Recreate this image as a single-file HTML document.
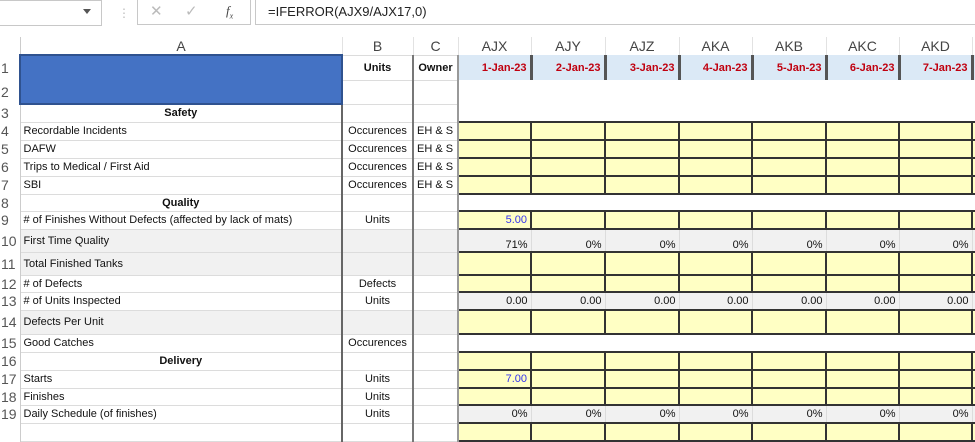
<!DOCTYPE html>
<html><head><meta charset="utf-8"><style>
body{margin:0;width:975px;height:430px;overflow:hidden;background:#fff;font-family:"Liberation Sans",sans-serif;position:relative}
.nb{position:absolute;left:-1px;top:0;width:102px;height:24px;border:1px solid #c8c8c8;border-left:none;background:#fff}
.tb{position:absolute;left:137px;top:0;width:112px;height:24px;border:1px solid #c8c8c8;border-top:none}
.fb{position:absolute;left:255px;top:0;width:730px;height:24px;border:1px solid #c8c8c8;border-top:none;font-size:13px;line-height:24px;padding-left:12px;color:#222}
table{position:absolute;left:0;top:37px;width:982px;border-collapse:collapse;table-layout:fixed;font-size:11px;color:#111}
td{padding:0 3px;white-space:nowrap;overflow:hidden;border:1px solid #dcdcdc}
td.rh{color:#555;font-size:14px;text-align:left;padding:0 0 0 1px;border:none;border-right:1px solid #ccc}
tr.h td{text-align:center;color:#444;font-size:14px;border:none;border-right:1px solid #e2e2e2}
.ca{border-left:none;border-right:2px solid #666}
.cb{text-align:center;border-right:2px solid #777}
.cc{border-right:2px solid #999}
.y{background:#ffffc4;border:2px solid #333}
.g{background:#f1f1f1;border:1px solid #dcdcdc;text-align:center}
.gA{background:#f1f1f1}
.d{background:#dbe9f6;color:#c0000f;font-weight:bold;text-align:right;border:none;border-right:3px solid #555}
.b{font-weight:bold;text-align:center}
.bl{color:#3333ee;text-align:right}
.w{border:none}
</style></head><body>
<div class="nb"><span style="position:absolute;right:10px;top:8px;border:4px solid transparent;border-top:5px solid #555"></span></div>
<div style="position:absolute;left:118px;top:6px;color:#bbb;font-size:12px">⋮</div>
<div class="tb"><span style="position:absolute;left:12px;top:2px;color:#bbb;font-size:15px">✕</span><span style="position:absolute;left:47px;top:2px;color:#bbb;font-size:15px">✓</span><span style="position:absolute;left:88px;top:3px;color:#444;font-size:13px;font-style:italic;font-family:'Liberation Serif',serif">f<sub style="font-size:8px">x</sub></span></div>
<div class="fb">=IFERROR(AJX9/AJX17,0)</div>
<table>
<colgroup><col style="width:20px"><col style="width:322px"><col style="width:71px"><col style="width:45px"><col style="width:73px"><col style="width:74px"><col style="width:74px"><col style="width:73px"><col style="width:74px"><col style="width:73px"><col style="width:73px"><col style="width:10px"></colgroup>
<tr class="h" style="height:18px"><td style="border-right:1px solid #ccc"></td><td>A</td><td>B</td><td>C</td><td>AJX</td><td>AJY</td><td>AJZ</td><td>AKA</td><td>AKB</td><td>AKC</td><td>AKD</td><td></td></tr>
<tr style="height:25px"><td class="rh">1</td><td rowspan="2" style="background:#4472c4;border:2px solid #2f528f"></td><td class="b" style="border-right:2px solid #777">Units</td><td class="b cc">Owner</td><td class="d">1-Jan-23</td><td class="d">2-Jan-23</td><td class="d">3-Jan-23</td><td class="d">4-Jan-23</td><td class="d">5-Jan-23</td><td class="d">6-Jan-23</td><td class="d">7-Jan-23</td><td class="d"></td></tr>
<tr style="height:24px"><td class="rh">2</td><td class="cb"></td><td class="cc"></td><td colspan="8" class="w"></td></tr>
<tr style="height:18px"><td class="rh">3</td><td class="ca b">Safety</td><td class="cb"></td><td class="cc"></td><td colspan="8" class="w"></td></tr>
<tr style="height:18px"><td class="rh">4</td><td class="ca">Recordable Incidents</td><td class="cb">Occurences</td><td class="cc">EH &amp; S</td><td class="y"></td><td class="y"></td><td class="y"></td><td class="y"></td><td class="y"></td><td class="y"></td><td class="y"></td><td class="y"></td></tr>
<tr style="height:18px"><td class="rh">5</td><td class="ca">DAFW</td><td class="cb">Occurences</td><td class="cc">EH &amp; S</td><td class="y"></td><td class="y"></td><td class="y"></td><td class="y"></td><td class="y"></td><td class="y"></td><td class="y"></td><td class="y"></td></tr>
<tr style="height:18px"><td class="rh">6</td><td class="ca">Trips to Medical / First Aid</td><td class="cb">Occurences</td><td class="cc">EH &amp; S</td><td class="y"></td><td class="y"></td><td class="y"></td><td class="y"></td><td class="y"></td><td class="y"></td><td class="y"></td><td class="y"></td></tr>
<tr style="height:18px"><td class="rh">7</td><td class="ca">SBI</td><td class="cb">Occurences</td><td class="cc">EH &amp; S</td><td class="y"></td><td class="y"></td><td class="y"></td><td class="y"></td><td class="y"></td><td class="y"></td><td class="y"></td><td class="y"></td></tr>
<tr style="height:17px"><td class="rh">8</td><td class="ca b">Quality</td><td class="cb"></td><td class="cc"></td><td colspan="8" class="w"></td></tr>
<tr style="height:18px"><td class="rh">9</td><td class="ca"># of Finishes Without Defects (affected by lack of mats)</td><td class="cb">Units</td><td class="cc"></td><td class="y bl">5.00</td><td class="y"></td><td class="y"></td><td class="y"></td><td class="y"></td><td class="y"></td><td class="y"></td><td class="y"></td></tr>
<tr style="height:23px"><td class="rh">10</td><td class="ca gA">First Time Quality</td><td class="cb gA"></td><td class="cc gA"></td><td class="g" style="text-align:right;vertical-align:bottom">71%</td><td class="g" style="text-align:right;vertical-align:bottom">0%</td><td class="g" style="text-align:right;vertical-align:bottom">0%</td><td class="g" style="text-align:right;vertical-align:bottom">0%</td><td class="g" style="text-align:right;vertical-align:bottom">0%</td><td class="g" style="text-align:right;vertical-align:bottom">0%</td><td class="g" style="text-align:right;vertical-align:bottom">0%</td><td class="g"></td></tr>
<tr style="height:23px"><td class="rh">11</td><td class="ca gA">Total Finished Tanks</td><td class="cb gA"></td><td class="cc gA"></td><td class="y"></td><td class="y"></td><td class="y"></td><td class="y"></td><td class="y"></td><td class="y"></td><td class="y"></td><td class="y"></td></tr>
<tr style="height:17px"><td class="rh">12</td><td class="ca"># of Defects</td><td class="cb">Defects</td><td class="cc"></td><td class="y"></td><td class="y"></td><td class="y"></td><td class="y"></td><td class="y"></td><td class="y"></td><td class="y"></td><td class="y"></td></tr>
<tr style="height:18px"><td class="rh">13</td><td class="ca"># of Units Inspected</td><td class="cb">Units</td><td class="cc"></td><td class="g" style="text-align:right">0.00</td><td class="g" style="text-align:right">0.00</td><td class="g" style="text-align:right">0.00</td><td class="g" style="text-align:right">0.00</td><td class="g" style="text-align:right">0.00</td><td class="g" style="text-align:right">0.00</td><td class="g" style="text-align:right">0.00</td><td class="g"></td></tr>
<tr style="height:24px"><td class="rh">14</td><td class="ca gA">Defects Per Unit</td><td class="cb gA"></td><td class="cc gA"></td><td class="y"></td><td class="y"></td><td class="y"></td><td class="y"></td><td class="y"></td><td class="y"></td><td class="y"></td><td class="y"></td></tr>
<tr style="height:18px"><td class="rh">15</td><td class="ca">Good Catches</td><td class="cb">Occurences</td><td class="cc"></td><td colspan="8" class="w"></td></tr>
<tr style="height:18px"><td class="rh">16</td><td class="ca b">Delivery</td><td class="cb"></td><td class="cc"></td><td class="y"></td><td class="y"></td><td class="y"></td><td class="y"></td><td class="y"></td><td class="y"></td><td class="y"></td><td class="y"></td></tr>
<tr style="height:18px"><td class="rh">17</td><td class="ca">Starts</td><td class="cb">Units</td><td class="cc"></td><td class="y bl">7.00</td><td class="y"></td><td class="y"></td><td class="y"></td><td class="y"></td><td class="y"></td><td class="y"></td><td class="y"></td></tr>
<tr style="height:17px"><td class="rh">18</td><td class="ca">Finishes</td><td class="cb">Units</td><td class="cc"></td><td class="y"></td><td class="y"></td><td class="y"></td><td class="y"></td><td class="y"></td><td class="y"></td><td class="y"></td><td class="y"></td></tr>
<tr style="height:18px"><td class="rh">19</td><td class="ca">Daily Schedule (of finishes)</td><td class="cb">Units</td><td class="cc"></td><td class="g" style="text-align:right">0%</td><td class="g" style="text-align:right">0%</td><td class="g" style="text-align:right">0%</td><td class="g" style="text-align:right">0%</td><td class="g" style="text-align:right">0%</td><td class="g" style="text-align:right">0%</td><td class="g" style="text-align:right">0%</td><td class="g"></td></tr>
<tr style="height:18px"><td class="rh"></td><td class="ca"></td><td class="cb"></td><td class="cc"></td><td class="y"></td><td class="y"></td><td class="y"></td><td class="y"></td><td class="y"></td><td class="y"></td><td class="y"></td><td class="y"></td></tr>
</table>
</body></html>
